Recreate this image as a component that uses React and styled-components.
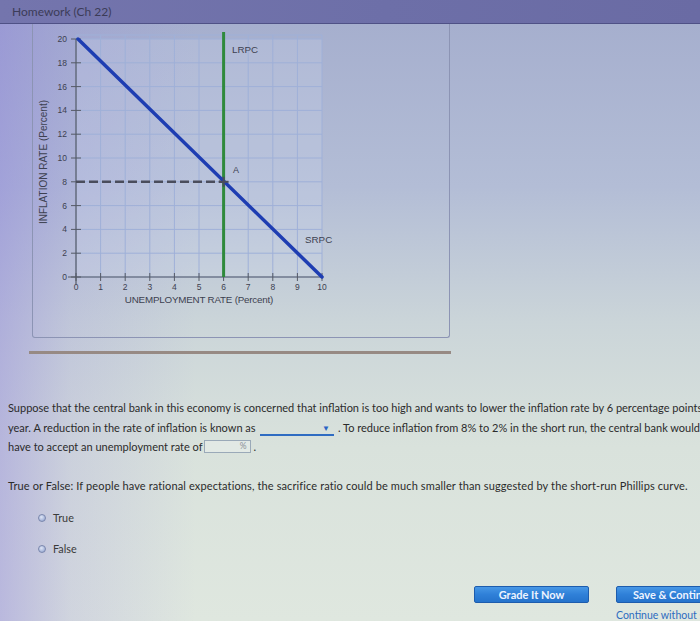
import React from 'react'
import styled, { createGlobalStyle } from 'styled-components'

const GlobalStyle = createGlobalStyle`
  html, body {
    margin: 0;
    padding: 0;
    overflow: hidden;
  }
  body {
    font-family: 'Lato', 'Open Sans', sans-serif;
  }
`;

const Page = styled.div`
  width: 700px;
  height: 621px;
  overflow: hidden;
  display: flex;
  flex-direction: column;
  background:
    linear-gradient(90deg, rgba(140, 128, 220, 0.45) 0%, rgba(140, 128, 220, 0.18) 10%, rgba(140, 128, 220, 0) 28%),
    linear-gradient(180deg, #a4adcd 0%, #b3bdd6 30%, #cbd5d9 52%, #d9e2dc 72%, #dfe7df 100%);
`;

const Header = styled.div`
  height: 23px;
  flex-shrink: 0;
  display: flex;
  align-items: center;
  padding-left: 12px;
  background: linear-gradient(90deg, #7475ad 0%, #6d6fa8 55%, #6a6ba4 100%);
  border-bottom: 1px solid #4f5186;
  font-size: 12px;
  color: #3c3c58;
`;

const Panel = styled.div`
  margin-left: 32px;
  width: 416px;
  height: 313px;
  border: 1px solid #8c94b4;
  border-top: none;
  border-radius: 0 0 3px 3px;
  flex-shrink: 0;
`;

const Separator = styled.div`
  margin: 13px 0 0 29px;
  width: 422px;
  height: 3px;
  background: #978a84;
  flex-shrink: 0;
`;

const Question = styled.div`
  margin: ${(p) => p.$top}px 0 0 8px;
  font-size: 11px;
  line-height: 19.5px;
  letter-spacing: ${(p) => p.$spacing || 0}px;
  color: #2b2b2b;
  white-space: nowrap;
`;

const Line = styled.div`
  display: flex;
  align-items: center;
`;

const Dropdown = styled.span`
  display: inline-flex;
  justify-content: flex-end;
  align-items: center;
  width: 78px;
  height: 12px;
  margin: 4px 4px 0 4px;
  padding-right: 4px;
  border-bottom: 2px solid #2f6cc2;
  color: #2a63c4;
  font-size: 8px;
`;

const AnswerBox = styled.span`
  display: inline-flex;
  justify-content: flex-end;
  align-items: center;
  width: 42px;
  height: 11px;
  margin: 0 3px 0 1px;
  padding-right: 3px;
  border: 1px solid #9aa9b8;
  background: rgba(255, 255, 255, 0.25);
  color: #8a8f98;
  font-size: 8.5px;
`;

const Options = styled.div`
  margin-top: 7px;
  display: flex;
  flex-direction: column;
`;

const Option = styled.label`
  height: 31px;
  display: flex;
  align-items: center;
  gap: 7px;
  padding-left: 38px;
  font-size: 10.8px;
  color: #3a3a3a;
`;

const Radio = styled.span`
  width: 6px;
  height: 6px;
  border-radius: 50%;
  border: 1px solid #7a87ad;
  background: radial-gradient(circle at 40% 35%, #dfe6f6 0%, #a3b2d8 70%, #8796c4 100%);
`;

const Actions = styled.div`
  margin: 22px 0 0 474px;
  display: flex;
  gap: 27px;
`;

const ButtonGroup = styled.div`
  display: flex;
  flex-direction: column;
  gap: 6px;
`;

const Button = styled.button`
  width: 115px;
  height: 17px;
  padding: 0;
  flex-shrink: 0;
  border: 1px solid #1d5cad;
  border-radius: 2px;
  background: linear-gradient(180deg, #4797e6 0%, #2f80d8 50%, #2573cc 100%);
  color: #eef4ff;
  font-family: 'Lato', sans-serif;
  font-weight: 700;
  font-size: 11px;
  white-space: nowrap;
`;

const SkipLink = styled.span`
  font-size: 10.5px;
  color: #2d6cc0;
  white-space: nowrap;
`;

const X0 = 43;
const XU = 24.6;
const Y0 = 253;
const YU = 11.9;
const px = (v) => X0 + v * XU;
const py = (v) => Y0 - v * YU;

const xs = [0, 1, 2, 3, 4, 5, 6, 7, 8, 9, 10];
const ys = [0, 2, 4, 6, 8, 10, 12, 14, 16, 18, 20];

const Chart = () => (
  <svg width="416" height="313" viewBox="0 0 416 313">
    <rect x={px(0)} y={py(20)} width={px(10) - px(0)} height={py(0) - py(20)} fill="rgba(215,226,244,0.2)" />
    {xs.map((v) => (
      <line key={'gx' + v} x1={px(v)} y1={py(20) - 4} x2={px(v)} y2={py(0)} stroke="#9fb0d8" strokeWidth="1" />
    ))}
    {ys.map((v) => (
      <line key={'gy' + v} x1={px(0)} y1={py(v)} x2={px(10)} y2={py(v)} stroke="#9fb0d8" strokeWidth="1" />
    ))}
    <line x1={px(0)} y1={py(20) - 4} x2={px(10)} y2={py(20) - 4} stroke="#9fb0d8" strokeWidth="1" />

    <line x1={px(0) - 8} y1={py(0)} x2={px(10)} y2={py(0)} stroke="#555a66" strokeWidth="1.2" />
    <line x1={px(0)} y1={py(20)} x2={px(0)} y2={py(0) + 7} stroke="#555a66" strokeWidth="1.2" />
    {xs.map((v) => (
      <line key={'tx' + v} x1={px(v)} y1={py(0) - 4} x2={px(v)} y2={py(0) + 4} stroke="#555a66" strokeWidth="1" />
    ))}
    {ys.map((v) => (
      <line key={'ty' + v} x1={px(0) - 5} y1={py(v)} x2={px(0) + 5} y2={py(v)} stroke="#555a66" strokeWidth="1" />
    ))}

    <g fontFamily="'Liberation Sans', Arial, sans-serif" fill="#3d4150">
      {ys.map((v) => (
        <text key={'ly' + v} x={px(0) - 9} y={py(v) + 3} fontSize="8.5" textAnchor="end">{v}</text>
      ))}
      {xs.map((v) => (
        <text key={'lx' + v} x={px(v)} y={py(0) + 13} fontSize="8.5" textAnchor="middle">{v}</text>
      ))}
      <text x="166" y="279" fontSize="9.8" textAnchor="middle" letterSpacing="-0.2">UNEMPLOYMENT RATE (Percent)</text>
      <text x="14" y="138" fontSize="10" textAnchor="middle" transform="rotate(-90 14 138)">INFLATION RATE (Percent)</text>
      <text x="199" y="29" fontSize="9.8">LRPC</text>
      <text x="200" y="149" fontSize="9">A</text>
      <text x="272" y="219" fontSize="9.8">SRPC</text>
    </g>

    <line x1={px(6)} y1="8" x2={px(6)} y2={py(0)} stroke="#2f8a3c" strokeWidth="3" />
    <line x1={px(0)} y1={py(8)} x2={px(6)} y2={py(8)} stroke="#4a4d5c" strokeWidth="2.6" strokeDasharray="9 4" />
    <line x1={px(0) + 2} y1={py(20)} x2={px(10)} y2={py(0)} stroke="#1e3db2" strokeWidth="3.5" strokeLinecap="round" />
    <line x1={px(6) - 5} y1={py(8)} x2={px(6) + 5} y2={py(8)} stroke="#4a4d5c" strokeWidth="2" />
    <line x1={px(6)} y1={py(8) - 5} x2={px(6)} y2={py(8) + 5} stroke="#4a4d5c" strokeWidth="2" />
  </svg>
);

const App = () => {
  return (
    <Page>
      <GlobalStyle />
      <Header>Homework (Ch 22)</Header>
      <Panel>
        <Chart />
      </Panel>
      <Separator />
      <Question $top={44}>
        <Line>Suppose that the central bank in this economy is concerned that inflation is too high and wants to lower the inflation rate by 6 percentage points next</Line>
        <Line>
          year. A reduction in the rate of inflation is known as
          <Dropdown>▼</Dropdown>
          . To reduce inflation from 8% to 2% in the short run, the central bank would
        </Line>
        <Line>
          have to accept an unemployment rate of
          <AnswerBox>%</AnswerBox>.
        </Line>
      </Question>
      <Question $top={19} $spacing={0.12}>
        <Line>True or False: If people have rational expectations, the sacrifice ratio could be much smaller than suggested by the short-run Phillips curve.</Line>
      </Question>
      <Options>
        <Option><Radio />True</Option>
        <Option><Radio />False</Option>
      </Options>
      <Actions>
        <Button>Grade It Now</Button>
        <ButtonGroup>
          <Button>Save &amp; Continue</Button>
          <SkipLink>Continue without saving</SkipLink>
        </ButtonGroup>
      </Actions>
    </Page>
  )
}

export default App
